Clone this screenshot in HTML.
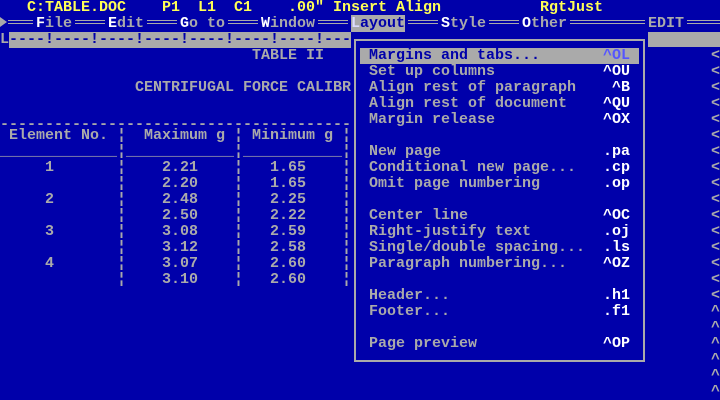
<!DOCTYPE html>
<html><head><meta charset="utf-8"><style>
html,body{margin:0;padding:0;background:#0000AA;width:720px;height:400px;overflow:hidden;position:relative}
.t{position:absolute;white-space:pre;font-family:"Liberation Mono","DejaVu Sans Mono",monospace;font-size:15px;font-weight:bold;line-height:16px;height:16px;color:#AAAAAA}
.y{color:#FFFF55}.w{color:#FFFFFF}.b{background:#0000AA}
#box{position:absolute;left:354px;top:39px;width:287px;height:319px;border:2px solid #AAAAAA;background:#0000AA}
</style></head><body>
<span class="t y" style="left:27px;top:0">C:TABLE.DOC</span>
<span class="t y" style="left:162px;top:0">P1</span>
<span class="t y" style="left:198px;top:0">L1</span>
<span class="t y" style="left:234px;top:0">C1</span>
<span class="t y" style="left:288px;top:0">.00"</span>
<span class="t y" style="left:333px;top:0">Insert Align</span>
<span class="t y" style="left:540px;top:0">RgtJust</span>
<div style="position:absolute;left:0;top:17px;width:0;height:0;border-top:5px solid transparent;border-bottom:5px solid transparent;border-left:7px solid #AAAAAA"></div>
<div style="position:absolute;left:8px;top:20px;width:712px;height:2px;border-top:1px solid #AAAAAA;border-bottom:1px solid #AAAAAA"></div>
<span class="t b" style="left:33px;top:16px;padding:0 3px"><span class="w">F</span>ile</span>
<span class="t b" style="left:105px;top:16px;padding:0 3px"><span class="w">E</span>dit</span>
<span class="t b" style="left:177px;top:16px;padding:0 3px"><span class="w">G</span>o to</span>
<span class="t b" style="left:258px;top:16px;padding:0 3px"><span class="w">W</span>indow</span>
<span class="t" style="left:348px;top:16px;padding:0 3px;background:#0000AA"><span style="background:#AAAAAA;color:#0000AA"><span style="color:#DDDDFF">L</span>ayout</span></span>
<span class="t b" style="left:438px;top:16px;padding:0 3px"><span class="w">S</span>tyle</span>
<span class="t b" style="left:519px;top:16px;padding:0 3px"><span class="w">O</span>ther</span>
<span class="t b" style="left:645px;top:16px;padding:0 3px">EDIT</span>
<span class="t" style="left:0;top:32px">L</span>
<span class="t" style="left:9px;top:32px;background:#AAAAAA;color:#0000AA">----!----!----!----!----!----!----!---</span>
<div style="position:absolute;left:648px;top:32px;width:72px;height:15px;background:#AAAAAA"></div>
<span class="t" style="left:252px;top:48px">TABLE II</span>
<span class="t" style="left:135px;top:80px">CENTRIFUGAL FORCE CALIBR</span>
<span class="t" style="left:0;top:117px">---------------------------------------</span>
<span class="t" style="left:9px;top:128px">Element No.</span>
<span class="t" style="left:117px;top:128px">¦</span>
<span class="t" style="left:144px;top:128px">Maximum g</span>
<span class="t" style="left:234px;top:128px">¦</span>
<span class="t" style="left:252px;top:128px">Minimum g</span>
<span class="t" style="left:342px;top:128px">¦</span>
<span class="t" style="left:0;top:144px">_____________¦____________¦___________¦</span>
<span class="t" style="left:0;top:160px">     1       ¦    2.21    ¦   1.65    ¦</span>
<span class="t" style="left:0;top:176px">             ¦    2.20    ¦   1.65    ¦</span>
<span class="t" style="left:0;top:192px">     2       ¦    2.48    ¦   2.25    ¦</span>
<span class="t" style="left:0;top:208px">             ¦    2.50    ¦   2.22    ¦</span>
<span class="t" style="left:0;top:224px">     3       ¦    3.08    ¦   2.59    ¦</span>
<span class="t" style="left:0;top:240px">             ¦    3.12    ¦   2.58    ¦</span>
<span class="t" style="left:0;top:256px">     4       ¦    3.07    ¦   2.60    ¦</span>
<span class="t" style="left:0;top:272px">             ¦    3.10    ¦   2.60    ¦</span>
<span class="t" style="left:711px;top:48px">&lt;
&lt;
&lt;
&lt;
&lt;
&lt;
&lt;
&lt;
&lt;
&lt;
&lt;
&lt;
&lt;
&lt;
&lt;
&lt;
^
^
^
^
^
^</span>
<div id="box"></div>
<div style="position:absolute;left:360px;top:48px;width:279px;height:16px;background:#AAAAAA"></div>
<span class="t" style="left:369px;top:48px;color:#0000AA">Margins and tabs...</span>
<span class="t" style="left:603px;top:48px;color:#5555FF">^OL</span>
<span class="t" style="left:369px;top:64px">Set up columns</span><span class="t w" style="left:603px;top:64px">^OU</span>
<span class="t" style="left:369px;top:80px">Align rest of paragraph</span><span class="t w" style="left:612px;top:80px">^B</span>
<span class="t" style="left:369px;top:96px">Align rest of document</span><span class="t w" style="left:603px;top:96px">^QU</span>
<span class="t" style="left:369px;top:112px">Margin release</span><span class="t w" style="left:603px;top:112px">^OX</span>
<span class="t" style="left:369px;top:144px">New page</span><span class="t w" style="left:603px;top:144px">.pa</span>
<span class="t" style="left:369px;top:160px">Conditional new page...</span><span class="t w" style="left:603px;top:160px">.cp</span>
<span class="t" style="left:369px;top:176px">Omit page numbering</span><span class="t w" style="left:603px;top:176px">.op</span>
<span class="t" style="left:369px;top:208px">Center line</span><span class="t w" style="left:603px;top:208px">^OC</span>
<span class="t" style="left:369px;top:224px">Right-justify text</span><span class="t w" style="left:603px;top:224px">.oj</span>
<span class="t" style="left:369px;top:240px">Single/double spacing...</span><span class="t w" style="left:603px;top:240px">.ls</span>
<span class="t" style="left:369px;top:256px">Paragraph numbering...</span><span class="t w" style="left:603px;top:256px">^OZ</span>
<span class="t" style="left:369px;top:288px">Header...</span><span class="t w" style="left:603px;top:288px">.h1</span>
<span class="t" style="left:369px;top:304px">Footer...</span><span class="t w" style="left:603px;top:304px">.f1</span>
<span class="t" style="left:369px;top:336px">Page preview</span><span class="t w" style="left:603px;top:336px">^OP</span>
</body></html>
